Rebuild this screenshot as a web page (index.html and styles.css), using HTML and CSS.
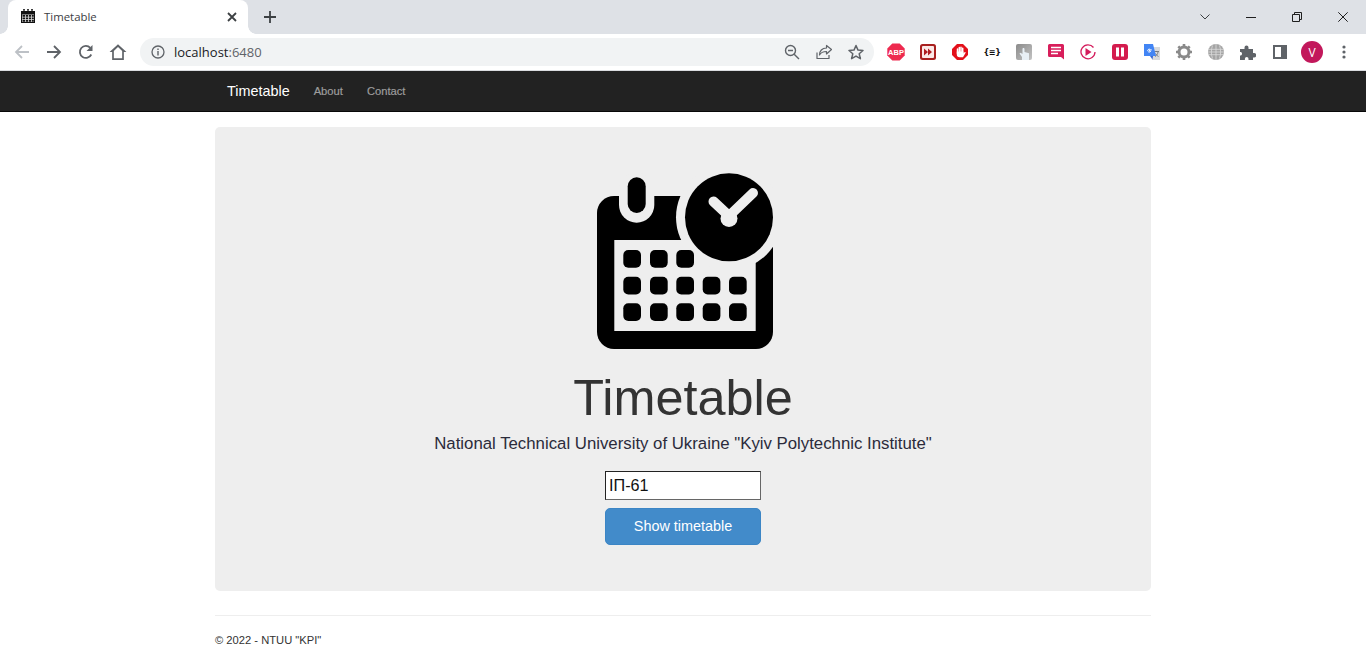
FILE: index.html
```html
<!DOCTYPE html>
<html lang="en">
<head>
<meta charset="utf-8">
<title>Timetable</title>
<link rel="stylesheet" href="styles.css">
</head>
<body>
<div class="chrome">
  <div class="tabstrip">
    <div class="tab">
      <svg class="favicon" viewBox="0 0 16 16" width="16" height="16"><path d="M1 3h14v12H1z" fill="#111"/><path d="M3 1h2v3H3zM7 1h2v3H7zM11 1h2v3h-2z" fill="#111"/><path d="M3.500 1.500h1v1.500h-1zM7.500 1.500h1v1.500h-1zM11.500 1.500h1v1.500h-1z" fill="#ccc"/><path d="M2 6.500h12v7.500H2z" fill="#ddd"/><path d="M2.500 7h2.500v1.700H2.500zM5.800 7h2.200v1.700H5.800zM8.800 7h2.200v1.700H8.800zM11.800 7h2v1.700h-2zM2.500 9.500h2.500v1.700H2.500zM5.800 9.500h2.200v1.700H5.800zM8.800 9.500h2.200v1.700H8.800zM11.800 9.500h2v1.700h-2zM2.500 12h2.500v1.700H2.500zM5.800 12h2.200v1.700H5.800zM8.800 12h2.200v1.700H8.800zM11.800 12h2v1.700h-2z" fill="#111"/></svg>
      <span class="tab-title">Timetable</span>
      <svg class="tab-close" viewBox="0 0 10 10" width="10" height="10"><path d="M1 1l8 8M9 1l-8 8" stroke="#3c4043" stroke-width="1.800" fill="none"/></svg>
    </div>
    <svg class="newtab" viewBox="0 0 12 12" width="12" height="12"><path d="M6 0v12M0 6h12" stroke="#3c4043" stroke-width="1.800" fill="none"/></svg>
    <div class="win-controls">
      <span class="win-btn"><svg viewBox="0 0 10 6" width="10" height="6"><path d="M.5.500l4.500 4.500 4.500-4.500" stroke="#3c4043" fill="none"/></svg></span>
      <span class="win-btn"><svg viewBox="0 0 10 10" width="10" height="10"><path d="M0 5.500h10" stroke="#1f1f1f" fill="none"/></svg></span>
      <span class="win-btn"><svg viewBox="0 0 10 10" width="10" height="10"><path d="M.5 2.500h7v7h-7zM2.500 2.500v-2h7v7h-2" stroke="#1f1f1f" fill="none"/></svg></span>
      <span class="win-btn"><svg viewBox="0 0 10 10" width="10" height="10"><path d="M.3.300l9.400 9.400M9.700.300l-9.400 9.400" stroke="#1f1f1f" fill="none"/></svg></span>
    </div>
  </div>
  <div class="toolbar">
    <span class="tool"><svg viewBox="0 0 16 16" width="16" height="16"><path d="M15 8H2M8 2L2 8l6 6" stroke="#bdc1c6" stroke-width="1.800" fill="none"/></svg></span>
    <span class="tool"><svg viewBox="0 0 16 16" width="16" height="16"><path d="M1 8h13M8 2l6 6-6 6" stroke="#5f6368" stroke-width="1.800" fill="none"/></svg></span>
    <span class="tool"><svg viewBox="0 0 16 16" width="16" height="16"><path d="M13.300 10.500A6 6 0 1 1 12.300 3.800" stroke="#5f6368" stroke-width="1.800" fill="none"/><path d="M14.500 1v6h-6z" fill="#5f6368"/></svg></span>
    <span class="tool"><svg viewBox="0 0 16 16" width="18" height="18"><path d="M8 1L.5 8h2.300v7h10.400V8h2.300zM4.300 13.600V7L8 3.500 11.700 7v6.600z" fill="#5f6368"/></svg></span>
    <div class="omnibox">
      <svg class="info" viewBox="0 0 14 14" width="14" height="14"><circle cx="7" cy="7" r="6" stroke="#5f6368" stroke-width="1.300" fill="none"/><path d="M6.300 6h1.400v4.500H6.300zM6.300 3.500h1.400v1.400H6.300z" fill="#5f6368"/></svg>
      <span class="url">localhost<span class="url-port">:6480</span></span>
      <span class="omni-icons">
        <span class="omni-icon"><svg viewBox="0 0 16 16" width="16" height="16"><circle cx="6.500" cy="6.500" r="5" stroke="#5f6368" stroke-width="1.400" fill="none"/><path d="M4 6.500h5M10.200 10.200L15 15" stroke="#5f6368" stroke-width="1.400" fill="none"/></svg></span>
        <span class="omni-icon"><svg viewBox="0 0 16 16" width="16" height="16"><path d="M1 8.500v6h12V11M15.500 5.500L10.500 1.500v2.500C6 4 3.500 7 3.500 11c1.500-2.800 3.800-3.500 7-3.500V10z" stroke="#5f6368" stroke-width="1.200" fill="none" stroke-linejoin="round"/></svg></span>
        <span class="omni-icon"><svg viewBox="0 0 16 16" width="16" height="16"><path d="M8 1.500l2 4.600 5 .4-3.800 3.300 1.200 4.900L8 12.100l-4.400 2.600 1.200-4.900L1 6.500l5-.4z" stroke="#5f6368" stroke-width="1.500" fill="none" stroke-linejoin="round"/></svg></span>
      </span>
    </div>
    <div class="extensions">
      <span class="ext"><svg viewBox="0 0 18 18" width="18" height="18"><path d="M5.300.500h7.400l5 5v7l-5 5H5.300l-5-5v-7z" fill="#ee2a4f"/><text x="9" y="11.800" class="ext-abp">ABP</text></svg></span>
      <span class="ext"><svg viewBox="0 0 16 16" width="16" height="16"><rect width="16" height="16" rx="2.500" fill="#a8201f"/><rect x="2" y="2" width="12" height="12" rx="1" fill="#fbe9e7"/><path d="M4 4.500L8 8l-4 3.500zM8 4.500L12 8l-4 3.500z" fill="#b01e22"/></svg></span>
      <span class="ext"><svg viewBox="0 0 16 16" width="16" height="16"><path d="M5 0h6l5 5v6l-5 5H5l-5-5V5z" fill="#e3101a"/><path d="M5.500 5v4.500M7.300 3.500v5M9 3.300v5M10.700 4.300v5" stroke="#fff" stroke-width="1.500" stroke-linecap="round"/><path d="M4.800 7.500h6.700v2l1-1.200c.6-.6 1.400 0 1 .7L11 13.200H7.500c-1.700 0-2.700-1-2.700-2.700z" fill="#fff"/></svg></span>
      <span class="ext"><span class="ext-json">{≡}</span></span>
      <span class="ext"><svg viewBox="0 0 16 16" width="16" height="16"><defs><linearGradient id="fg" x1="0" y1="0" x2="1" y2="1"><stop offset="0" stop-color="#8a8a8a"/><stop offset="1" stop-color="#c4c4c4"/></linearGradient></defs><rect width="16" height="16" rx="2" fill="url(#fg)"/><path d="M6 16v-3L3.500 9.500l1-.7L6.500 10V5c0-1.300 2-1.300 2 0v3l4.500 1.300V16z" fill="#e8eff5"/></svg></span>
      <span class="ext"><svg viewBox="0 0 16 16" width="16" height="16"><path d="M1.500 0h13A1.500 1.500 0 0 1 16 1.500V15.500L13 13H1.500A1.500 1.500 0 0 1 0 11.500v-10A1.500 1.500 0 0 1 1.500 0z" fill="#d81e5b"/><path d="M3 3.500h10M3 6.500h10M3 9.500h7" stroke="#fff" stroke-width="1.400"/></svg></span>
      <span class="ext"><svg viewBox="0 0 16 16" width="16" height="16"><path d="M13.500 3.500A7 7 0 1 0 15 8" stroke="#d41c5c" stroke-width="1.300" fill="none"/><path d="M5.500 4L11.500 8 5.500 12z" fill="#d41c5c"/></svg></span>
      <span class="ext"><svg viewBox="0 0 16 16" width="16" height="16"><rect width="16" height="16" rx="3" fill="#d41c4e"/><path d="M4 3.500h3v9H4zM9 3.500h3v9H9z" fill="#fff"/></svg></span>
      <span class="ext"><svg viewBox="0 0 16 16" width="16" height="16"><path d="M6 3h10v13H8z" fill="#d8dadc"/><path d="M10 7.500h5M12.500 7v1M11 12.500c1.700-1 2.700-2.500 3-4.500M11.500 9.500c.7 1.200 1.500 2 3 3" stroke="#6d7378" fill="none" stroke-width=".9"/><path d="M0 0h9l3 12H0z" fill="#4285f4"/><path d="M6 12l2.500 3.500L9 12z" fill="#3367d6"/><path d="M7.800 5.900H5.500v1.200h1.200a1.500 1.500 0 1 1-.5-1.700" stroke="#fff" stroke-width=".9" fill="none"/></svg></span>
      <span class="ext"><svg viewBox="0 0 16 16" width="16" height="16"><circle cx="8" cy="8" r="5" stroke="#8a8a8a" stroke-width="3" fill="none"/><path d="M8 0v3M8 13v3M0 8h3M13 8h3M2.300 2.300l2.200 2.200M11.500 11.500l2.200 2.200M2.300 13.700l2.200-2.200M11.500 4.500l2.200-2.200" stroke="#8a8a8a" stroke-width="2.600"/></svg></span>
      <span class="ext"><svg viewBox="0 0 16 16" width="16" height="16"><circle cx="8" cy="8" r="8" fill="#a4a4a4"/><path d="M0 5.300h16M0 8h16M0 10.700h16M8 0v16M4.500 1.500c-1.500 4-1.500 9 0 13M11.500 1.500c1.500 4 1.500 9 0 13" stroke="#dcdcdc" stroke-width=".8" fill="none"/></svg></span>
      <span class="ext"><svg viewBox="0 0 16 16" width="16" height="16"><path d="M0 5h4.500V3.500a2 2 0 0 1 4 0V5H13v4h1a2.200 2.200 0 0 1 0 4.500h-1V16H8.500v-1.300a1.800 1.800 0 0 0-3.600 0V16H0v-4.500h1a2 2 0 0 0 0-3.500H0z" fill="#5f6368"/></svg></span>
      <span class="ext"><svg viewBox="0 0 14 14" width="14" height="14"><path d="M0 0h14v14H0zM2 2v10h6V2z" fill="#5f6368" fill-rule="evenodd"/></svg></span>
      <span class="ext"><span class="avatar">V</span></span>
      <span class="ext"><svg viewBox="0 0 4 14" width="4" height="14"><circle cx="2" cy="2" r="1.600" fill="#5f6368"/><circle cx="2" cy="7" r="1.600" fill="#5f6368"/><circle cx="2" cy="12" r="1.600" fill="#5f6368"/></svg></span>
    </div>
  </div>
</div>

<nav class="navbar">
  <div class="container navbar-inner">
    <a class="brand">Timetable</a>
    <a class="nav-link">About</a>
    <a class="nav-link">Contact</a>
  </div>
</nav>

<main class="container">
  <section class="jumbotron">
    <svg class="logo" viewBox="0 0 176 176" width="176" height="176">
      <rect x="0" y="23" width="176" height="153" rx="17" fill="#000"/>
      <rect x="17.300" y="67" width="141.400" height="91" fill="#eee"/>
      <rect x="22" y="0" width="35.300" height="49.700" rx="17.600" fill="#eee"/>
      <rect x="30.700" y="4.300" width="18" height="35.700" rx="9" fill="#000"/>
      <circle cx="132" cy="44.300" r="53" fill="#eee"/>
      <g fill="#000">
        <rect x="26.300" y="77" width="17.700" height="17.700" rx="5"/>
        <rect x="53" y="77" width="17.700" height="17.700" rx="5"/>
        <rect x="79.300" y="77" width="17.700" height="17.700" rx="5"/>
        <rect x="26.300" y="103.700" width="17.700" height="17.700" rx="5"/>
        <rect x="53" y="103.700" width="17.700" height="17.700" rx="5"/>
        <rect x="79.300" y="103.700" width="17.700" height="17.700" rx="5"/>
        <rect x="105.700" y="103.700" width="17.700" height="17.700" rx="5"/>
        <rect x="132" y="103.700" width="17.700" height="17.700" rx="5"/>
        <rect x="26.300" y="130.300" width="17.700" height="17.700" rx="5"/>
        <rect x="53" y="130.300" width="17.700" height="17.700" rx="5"/>
        <rect x="79.300" y="130.300" width="17.700" height="17.700" rx="5"/>
        <rect x="105.700" y="130.300" width="17.700" height="17.700" rx="5"/>
        <rect x="132" y="130.300" width="17.700" height="17.700" rx="5"/>
      </g>
      <circle cx="132" cy="44.300" r="44" fill="#000"/>
      <path d="M116.500 28.500L132 43 156 20" stroke="#eee" stroke-width="10" stroke-linecap="round" stroke-linejoin="round" fill="none"/>
      <circle cx="132" cy="45.500" r="8.500" fill="#eee"/>
    </svg>
    <h1 class="title">Timetable</h1>
    <p class="lead">National Technical University of Ukraine "Kyiv Polytechnic Institute"</p>
    <form class="group-form">
      <input class="group-input" type="text" value="ІП-61">
      <button class="show-btn" type="button">Show timetable</button>
    </form>
  </section>
  <hr class="rule">
  <footer class="footer">© 2022 - NTUU "KPI"</footer>
</main>
</body>
</html>
```

FILE: styles.css
```css
* { box-sizing: border-box; }
html, body { margin: 0; padding: 0; height: 100%; overflow: hidden; }
body { background: #fff; font-family: "Liberation Sans", Arial, sans-serif; color: #333; }

.chrome { height: 71px; font-family: "Open Sans", "Noto Sans", sans-serif; }
.tabstrip { height: 34px; background: #dee1e6; display: flex; align-items: center; }
.tab {
  position: relative; width: 240px; height: 34px; margin-left: 8px; background: #fff;
  border-radius: 8px 8px 0 0; display: flex; align-items: center; padding-left: 12px;
}
.tab::before, .tab::after {
  content: ""; position: absolute; bottom: 0; width: 8px; height: 8px;
  background: radial-gradient(circle at var(--cx) 0, #dee1e6 7.500px, #fff 8px);
}
.tab::before { left: -8px; --cx: 0; }
.tab::after { right: -8px; --cx: 8px; }
.favicon { flex: none; margin-top: -2px; }
.tab-title { margin: -2px 0 0 8px; font-size: 11.400px; color: #3c4043; flex: 1; }
.tab-close { margin-right: 11px; flex: none; }
.newtab { margin-left: 16px; }
.win-controls { margin-left: auto; display: flex; }
.win-btn { width: 46px; height: 28px; display: flex; align-items: center; justify-content: center; }

.toolbar {
  height: 37px; background: #fff; border-bottom: 1px solid #dadce0;
  display: flex; align-items: center; padding: 0 6px;
}
.tool { width: 32px; display: flex; justify-content: center; align-items: center; }
.omnibox {
  width: 734px; height: 28px; margin-left: 6px; background: #f1f3f4; border-radius: 14px;
  display: flex; align-items: center; padding-left: 11px;
}
.url { margin-left: 9px; font-size: 13px; color: #202124; }
.url-port { color: #5f6368; }
.omni-icons { margin-left: auto; display: flex; padding-right: 2px; }
.omni-icon { width: 32px; display: flex; justify-content: center; align-items: center; }
.extensions { display: flex; margin-left: 6px; }
.ext { width: 32px; height: 22px; display: flex; align-items: center; justify-content: center; }
.ext-abp { font: bold 7.500px "Liberation Sans", sans-serif; fill: #fff; text-anchor: middle; }
.ext-json { font: bold 8px "DejaVu Sans", sans-serif; color: #111; letter-spacing: -.3px; }
.avatar {
  width: 22px; height: 22px; border-radius: 50%; background: #c2185b; color: #fff;
  font-size: 12px; display: flex; align-items: center; justify-content: center;
}

.container { width: 936px; margin: 0 auto; }
.navbar { height: 41px; background: #222; border-bottom: 1px solid #080808; }
.navbar-inner { height: 40px; display: flex; align-items: center; padding-left: 12px; gap: 24px; }
.brand { font-size: 14.400px; color: #fff; }
.nav-link { font-size: 11.200px; color: #9d9d9d; -webkit-text-stroke: .2px #9d9d9d; }

.jumbotron {
  margin-top: 15px; height: 464px; background: #eee; border-radius: 5px;
  display: flex; flex-direction: column; align-items: center; padding-top: 46px;
}
.logo { display: block; flex: none; margin-left: 4px; }
.title { margin: 18px 0 0; font-size: 50.400px; line-height: 62px; font-weight: 400; color: #333; }
.lead { margin: 3px 0 0; font-size: 16.800px; line-height: 24px; color: #2b2b3b; }
.group-form { margin: 15px 0 0; display: flex; flex-direction: column; width: 156px; gap: 8px; }
.group-input {
  width: 156px; height: 29px; padding: 1px 3px; border: 1px solid; border-color: #222 #666 #666 #222;
  background: #fff; font: 16.200px "Liberation Sans", sans-serif; color: #111; border-radius: 0;
}
.show-btn {
  width: 156px; height: 37px; background: #428bca; border: 1px solid #3b85c5; border-radius: 5px;
  color: #fff; font: 14.400px "Liberation Sans", sans-serif; padding: 0 0 2px;
}
.rule { margin: 24px 0 0; border: 0; border-top: 1px solid #eee; }
.footer { margin-top: 17px; font-size: 11.200px; line-height: 14px; color: #333; }
```
